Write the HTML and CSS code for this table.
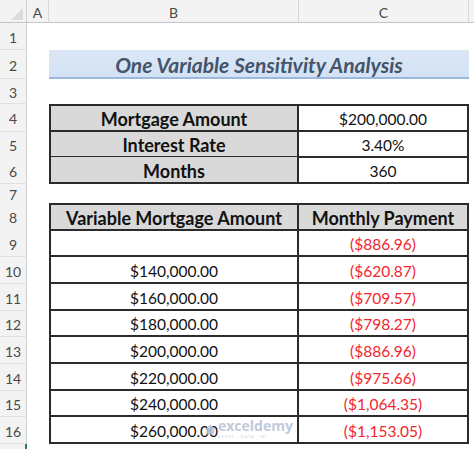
FILE: index.html
```html
<!DOCTYPE html>
<html>
<head>
    <meta charset="UTF-8">
    <title>One Variable Sensitivity Analysis</title>
    <link rel="stylesheet" href="styles.css">
</head>
<body>
<div class="sheet">
    <div class="row head">
        <div class="rh corner">
            <svg width="12" height="12" viewBox="0 0 12 12"><polygon points="12,0 12,12 0,12" fill="#dcdcdc"/></svg>
        </div>
        <div class="ch">A</div>
        <div class="ch">B</div>
        <div class="ch">C</div>
        <div class="ch end"></div>
    </div>
    <div class="row"><div class="rh">1</div></div>
    <div class="row r2">
        <div class="rh">2</div><div></div>
        <div class="title">One Variable Sensitivity Analysis</div>
    </div>
    <div class="row r3"><div class="rh">3</div></div>

    <div class="row r4">
        <div class="rh">4</div><div></div>
        <div class="cell lbl top">Mortgage Amount</div>
        <div class="cell val top">$200,000.00</div>
    </div>
    <div class="row r5">
        <div class="rh">5</div><div></div>
        <div class="cell lbl">Interest Rate</div>
        <div class="cell val">3.40%</div>
    </div>
    <div class="row">
        <div class="rh">6</div><div></div>
        <div class="cell lbl">Months</div>
        <div class="cell val">360</div>
    </div>
    <div class="row r7"><div class="rh">7</div></div>

    <div class="row">
        <div class="rh">8</div><div></div>
        <div class="cell lbl top">Variable Mortgage Amount</div>
        <div class="cell val lbl top">Monthly Payment</div>
    </div>
    <div class="row">
        <div class="rh">9</div><div></div>
        <div class="cell amt"></div>
        <div class="cell val neg">($886.96)</div>
    </div>
    <div class="row">
        <div class="rh">10</div><div></div>
        <div class="cell amt">$140,000.00</div>
        <div class="cell val neg">($620.87)</div>
    </div>
    <div class="row">
        <div class="rh">11</div><div></div>
        <div class="cell amt">$160,000.00</div>
        <div class="cell val neg">($709.57)</div>
    </div>
    <div class="row r12">
        <div class="rh">12</div><div></div>
        <div class="cell amt">$180,000.00</div>
        <div class="cell val neg">($798.27)</div>
    </div>
    <div class="row">
        <div class="rh">13</div><div></div>
        <div class="cell amt">$200,000.00</div>
        <div class="cell val neg">($886.96)</div>
    </div>
    <div class="row">
        <div class="rh">14</div><div></div>
        <div class="cell amt">$220,000.00</div>
        <div class="cell val neg">($975.66)</div>
    </div>
    <div class="row r15">
        <div class="rh">15</div><div></div>
        <div class="cell amt">$240,000.00</div>
        <div class="cell val neg">($1,064.35)</div>
    </div>
    <div class="row">
        <div class="rh">16</div><div></div>
        <div class="cell amt">$260,000.00</div>
        <div class="cell val neg">($1,153.05)</div>
    </div>
    <div class="row tail"><div class="rh sel"></div></div>

    <!-- watermark over the last rows -->
    <div class="mark">
        <svg width="13" height="13" viewBox="0 0 14 14"><path d="M1 7 L7 1.5 L13 7 L11 7 L11 12.5 L3 12.5 L3 7 Z" fill="#b9c6d8"/></svg>
        <div class="mark-text">
            <span class="mark-name">exceldemy</span>
            <span class="mark-sub">EXCEL · DATA · BI</span>
        </div>
    </div>
</div>
</body>
</html>
```

FILE: styles.css
```css
* {
    margin: 0;
    padding: 0;
    box-sizing: border-box;
}

body {
    background: #ffffff;
    font-family: Lato, "Liberation Sans", sans-serif;
    color: #111;
}

.sheet {
    width: 474px;
    height: 449px;
    position: relative;
    overflow: hidden;
}

.row {
    display: grid;
    grid-template-columns: 27px 22px 250px 170px 1fr;
    height: 27px;
}
.row.head { height: 23px; }
.row.r2 { height: 29px; }
.row.r3 { height: 25px; }
.row.r4 { height: 28px; }
.row.r5 { height: 25px; }
.row.r7 { height: 19px; }
.row.r12, .row.r15 { height: 26px; }
.row.tail { height: 5px; }

/* row / column headers */
.rh {
    grid-column: 1;
    background: #f3f3f3;
    border-right: 1px solid #cfcfcf;
    border-bottom: 1px solid #e0e0e0;
    display: flex;
    align-items: center;
    justify-content: center;
    font-size: 14px;
    color: #4a4a4a;
    padding-top: 2px;
}
.rh.corner {
    align-items: flex-end;
    justify-content: flex-end;
    padding: 0 3px 2px 0;
    border-bottom: 1px solid #c4c4c4;
}
.rh.sel {
    border-bottom: none;
    border-right: 2px solid #2f7d4f;
}
.ch {
    background: #f3f3f3;
    border-right: 1px solid #d8d8d8;
    border-bottom: 1px solid #c4c4c4;
    display: flex;
    align-items: center;
    justify-content: center;
    font-size: 14px;
    color: #4a4a4a;
    padding-top: 2px;
}
.ch.end { border-right: none; }

/* title band */
.title {
    grid-column: 3 / 5;
    background: linear-gradient(#dbe7f6, #d3e2f4);
    border-bottom: 2px solid #9db8dc;
    display: flex;
    align-items: center;
    justify-content: center;
    font-size: 21px;
    font-weight: bold;
    font-style: italic;
    color: #44546a;
    padding-top: 1px;
}

/* tables */
.cell {
    display: flex;
    align-items: center;
    justify-content: center;
    border-bottom: 2px solid #2b2b2b;
    border-right: 2px solid #2b2b2b;
    font-size: 15.5px;
    padding-top: 2px;
}
.cell.top { border-top: 2px solid #2b2b2b; }
.cell.lbl, .cell.amt {
    grid-column: 3;
    border-left: 2px solid #2b2b2b;
}
.cell.lbl {
    background: #d9d9d9;
    font-weight: bold;
    font-size: 18px;
}
.cell.val {
    grid-column: 4;
}
.cell.val.lbl { border-left: none; }
.cell.neg { color: #f2262e; }

/* watermark */
.mark {
    position: absolute;
    left: 204px;
    top: 419px;
    display: flex;
    align-items: center;
    gap: 1px;
    opacity: 0.85;
}
.mark-text {
    display: flex;
    flex-direction: column;
    line-height: 1;
}
.mark-name {
    font-family: "Open Sans", sans-serif;
    font-size: 14px;
    line-height: 14px;
    font-weight: bold;
    color: #b4c1d4;
}
.mark-sub {
    font-size: 4px;
    line-height: 4px;
    margin-top: 2px;
    letter-spacing: 1px;
    color: #c3ccd9;
}
```
